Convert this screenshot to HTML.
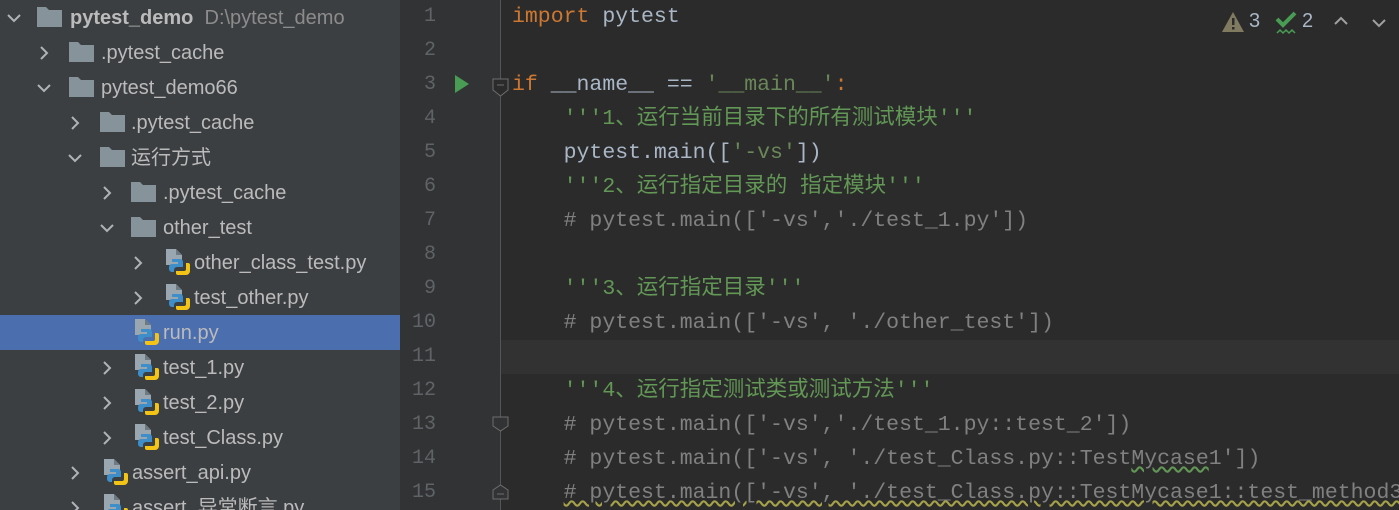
<!DOCTYPE html>
<html><head><meta charset="utf-8"><style>
html,body{margin:0;width:1399px;height:510px;overflow:hidden}
body{background:#2b2b2b;position:relative;font-family:"Liberation Sans","Noto Sans CJK SC",sans-serif}
#side{position:absolute;left:0;top:0;width:400px;height:510px;background:#3c3f41;overflow:hidden}
.row{position:absolute;left:0;width:400px;height:35px;color:#bbbbbb;font-size:20px;line-height:24px}
.row .t{position:absolute;top:6px;white-space:nowrap}
.row svg{position:absolute}
.sel{background:#4b6eaf}
#gut{position:absolute;left:400px;top:0;width:100px;height:510px;background:#313335}
#gline{position:absolute;left:500px;top:0;width:1px;height:510px;background:#555}
.ln{position:absolute;left:400px;width:36px;text-align:right;color:#606366;font:20px/26px "Liberation Mono",monospace}
.cl{position:absolute;left:512px;white-space:pre;color:#a9b7c6;font:21.5px/26px "Liberation Mono","Noto Sans CJK SC",monospace}
.k{color:#cc7832}.s{color:#6a8759}.d{color:#629755}.c{color:#808080}
</style></head><body>
<div id="side">
<svg width="0" height="0" style="position:absolute"><defs>
<symbol id="fo" viewBox="0 0 25 20"><path d="M0 0h9l3 3h13v17H0z" fill="#87939a"/></symbol>
<symbol id="py" viewBox="0 0 26 28"><path d="M2 0h10l6 6v10H2z" fill="#9aa7b0"/><path d="M12 0v6h6" fill="#6e7a82"/><path d="M8 10h8a3 3 0 0 1 3 3v5h-6a3 3 0 0 0-3 3v2H8a3 3 0 0 1-3-3v-2a3 3 0 0 1 3-3h6v-2H8z" fill="#3d8ec9"/><path d="M22 14h2a2 2 0 0 1 2 2v6a4 4 0 0 1-4 4h-8a2 2 0 0 1-2-2v-2h8a2 2 0 0 0 2-2z" fill="#f3c316"/></symbol>
<symbol id="cr" viewBox="0 0 12 16"><path d="M3 2l6 6-6 6" stroke="#aeb3b7" stroke-width="2" fill="none"/></symbol>
<symbol id="cd" viewBox="0 0 16 12"><path d="M2 3l6 6 6-6" stroke="#aeb3b7" stroke-width="2" fill="none"/></symbol>
</defs></svg>
<div class="row" style="top:0"><svg style="left:6px;top:12px" width="16" height="12"><use href="#cd"/></svg><svg style="left:37px;top:7px" width="25" height="20"><use href="#fo"/></svg><span class="t" style="left:70px;font-weight:bold">pytest_demo <span style="font-weight:normal;color:#8c8c8c">&nbsp;D:\pytest_demo</span></span></div>
<div class="row" style="top:35px"><svg style="left:38px;top:10px" width="12" height="16"><use href="#cr"/></svg><svg style="left:69px;top:7px" width="25" height="20"><use href="#fo"/></svg><span class="t" style="left:101px">.pytest_cache</span></div>
<div class="row" style="top:70px"><svg style="left:36px;top:12px" width="16" height="12"><use href="#cd"/></svg><svg style="left:69px;top:7px" width="25" height="20"><use href="#fo"/></svg><span class="t" style="left:101px">pytest_demo66</span></div>
<div class="row" style="top:105px"><svg style="left:69px;top:10px" width="12" height="16"><use href="#cr"/></svg><svg style="left:100px;top:7px" width="25" height="20"><use href="#fo"/></svg><span class="t" style="left:131px">.pytest_cache</span></div>
<div class="row" style="top:140px"><svg style="left:67px;top:12px" width="16" height="12"><use href="#cd"/></svg><svg style="left:100px;top:7px" width="25" height="20"><use href="#fo"/></svg><span class="t" style="left:131px">运行方式</span></div>
<div class="row" style="top:175px"><svg style="left:101px;top:10px" width="12" height="16"><use href="#cr"/></svg><svg style="left:131px;top:7px" width="25" height="20"><use href="#fo"/></svg><span class="t" style="left:163px">.pytest_cache</span></div>
<div class="row" style="top:210px"><svg style="left:99px;top:12px" width="16" height="12"><use href="#cd"/></svg><svg style="left:131px;top:7px" width="25" height="20"><use href="#fo"/></svg><span class="t" style="left:163px">other_test</span></div>
<div class="row" style="top:245px"><svg style="left:132px;top:10px" width="12" height="16"><use href="#cr"/></svg><svg style="left:164px;top:4px" width="26" height="28"><use href="#py"/></svg><span class="t" style="left:194px">other_class_test.py</span></div>
<div class="row" style="top:280px"><svg style="left:132px;top:10px" width="12" height="16"><use href="#cr"/></svg><svg style="left:164px;top:4px" width="26" height="28"><use href="#py"/></svg><span class="t" style="left:194px">test_other.py</span></div>
<div class="row sel" style="top:315px"><svg style="left:133px;top:4px" width="26" height="28"><use href="#py"/></svg><span class="t" style="left:163px">run.py</span></div>
<div class="row" style="top:350px"><svg style="left:101px;top:10px" width="12" height="16"><use href="#cr"/></svg><svg style="left:133px;top:4px" width="26" height="28"><use href="#py"/></svg><span class="t" style="left:163px">test_1.py</span></div>
<div class="row" style="top:385px"><svg style="left:101px;top:10px" width="12" height="16"><use href="#cr"/></svg><svg style="left:133px;top:4px" width="26" height="28"><use href="#py"/></svg><span class="t" style="left:163px">test_2.py</span></div>
<div class="row" style="top:420px"><svg style="left:101px;top:10px" width="12" height="16"><use href="#cr"/></svg><svg style="left:133px;top:4px" width="26" height="28"><use href="#py"/></svg><span class="t" style="left:163px">test_Class.py</span></div>
<div class="row" style="top:455px"><svg style="left:69px;top:10px" width="12" height="16"><use href="#cr"/></svg><svg style="left:102px;top:4px" width="26" height="28"><use href="#py"/></svg><span class="t" style="left:132px">assert_api.py</span></div>
<div class="row" style="top:490px"><svg style="left:69px;top:10px" width="12" height="16"><use href="#cr"/></svg><svg style="left:102px;top:4px" width="26" height="28"><use href="#py"/></svg><span class="t" style="left:132px">assert_异常断言.py</span></div>
</div>
<div id="gut"></div>
<div style="position:absolute;left:500px;top:340px;width:899px;height:34px;background:#323232"></div>
<div style="position:absolute;left:400px;top:340px;width:100px;height:34px;background:#313335"></div>
<div id="gline"></div>
<svg style="position:absolute;left:455px;top:75px" width="14" height="18"><path d="M0 0L14 9L0 18z" fill="#499c54"/></svg>
<svg style="position:absolute;left:492px;top:78px" width="18" height="20"><path d="M1 1h15v11l-7.5 6L1 12z" fill="#2b2b2b" stroke="#6e6e6e"/><path d="M5 7h7" stroke="#6e6e6e"/></svg>
<svg style="position:absolute;left:492px;top:416px" width="18" height="16"><path d="M1 1h15v9l-7.5 5L1 10z" fill="#313335" stroke="#6e6e6e"/></svg>
<svg style="position:absolute;left:492px;top:484px" width="18" height="16"><path d="M1 15h15V6L8.5 1 1 6z" fill="#313335" stroke="#6e6e6e"/><path d="M5 10h7" stroke="#6e6e6e"/></svg>
<div class="ln" style="top:4px">1</div><div class="ln" style="top:38px">2</div><div class="ln" style="top:72px">3</div><div class="ln" style="top:106px">4</div><div class="ln" style="top:140px">5</div><div class="ln" style="top:174px">6</div><div class="ln" style="top:208px">7</div><div class="ln" style="top:242px">8</div><div class="ln" style="top:276px">9</div><div class="ln" style="top:310px">10</div><div class="ln" style="top:344px">11</div><div class="ln" style="top:378px">12</div><div class="ln" style="top:412px">13</div><div class="ln" style="top:446px">14</div><div class="ln" style="top:480px">15</div>
<div class="cl" style="top:4px"><span class="k">import</span> pytest</div>
<div class="cl" style="top:72px"><span class="k">if</span> __name__ == <span class="s">'__main__'</span><span class="k">:</span></div>
<div class="cl" style="top:106px">    <span class="d">'''1、运行当前目录下的所有测试模块'''</span></div>
<div class="cl" style="top:140px">    pytest.main([<span class="s">'-vs'</span>])</div>
<div class="cl" style="top:174px">    <span class="d">'''2、运行指定目录的 指定模块'''</span></div>
<div class="cl" style="top:208px">    <span class="c"># pytest.main(['-vs','./test_1.py'])</span></div>
<div class="cl" style="top:276px">    <span class="d">'''3、运行指定目录'''</span></div>
<div class="cl" style="top:310px">    <span class="c"># pytest.main(['-vs', './other_test'])</span></div>
<div class="cl" style="top:378px">    <span class="d">'''4、运行指定测试类或测试方法'''</span></div>
<div class="cl" style="top:412px">    <span class="c"># pytest.main(['-vs','./test_1.py::test_2'])</span></div>
<div class="cl" style="top:446px">    <span class="c"># pytest.main(['-vs', './test_Class.py::Test<span style="text-decoration:underline wavy #629755">Mycase</span>1'])</span></div>
<div class="cl" style="top:480px">    <span class="c" style="text-decoration:underline wavy #a5a24a">#&nbsp;pytest.main(['-vs', './test_Class.py::TestMycase1::test_method3'])</span></div>
<div style="position:absolute;left:1200px;top:0;width:199px;height:46px;background:#2b2b2b"></div>
<svg style="position:absolute;left:1222px;top:12px" width="22" height="20"><path d="M11 0L22 20H0z" fill="#7f7a60"/><rect x="10" y="6" width="2.5" height="7" fill="#2b2b2b"/><rect x="10" y="15" width="2.5" height="2.5" fill="#2b2b2b"/></svg>
<span style="position:absolute;left:1249px;top:10px;color:#a9b7c6;font-size:20px">3</span>
<svg style="position:absolute;left:1275px;top:11px" width="22" height="24"><path d="M2 8l6 6L20 2" stroke="#499c54" stroke-width="4" fill="none"/><path d="M2 22l3-3 3 3 3-3 3 3 3-3 3 3" stroke="#499c54" stroke-width="1.5" fill="none"/></svg>
<span style="position:absolute;left:1302px;top:10px;color:#a9b7c6;font-size:20px">2</span>
<svg style="position:absolute;left:1333px;top:16px" width="16" height="10"><path d="M2 8l6-6 6 6" stroke="#a0a0a0" stroke-width="2" fill="none"/></svg>
<svg style="position:absolute;left:1371px;top:18px" width="16" height="10"><path d="M2 2l6 6 6-6" stroke="#a0a0a0" stroke-width="2" fill="none"/></svg>
</body></html>
